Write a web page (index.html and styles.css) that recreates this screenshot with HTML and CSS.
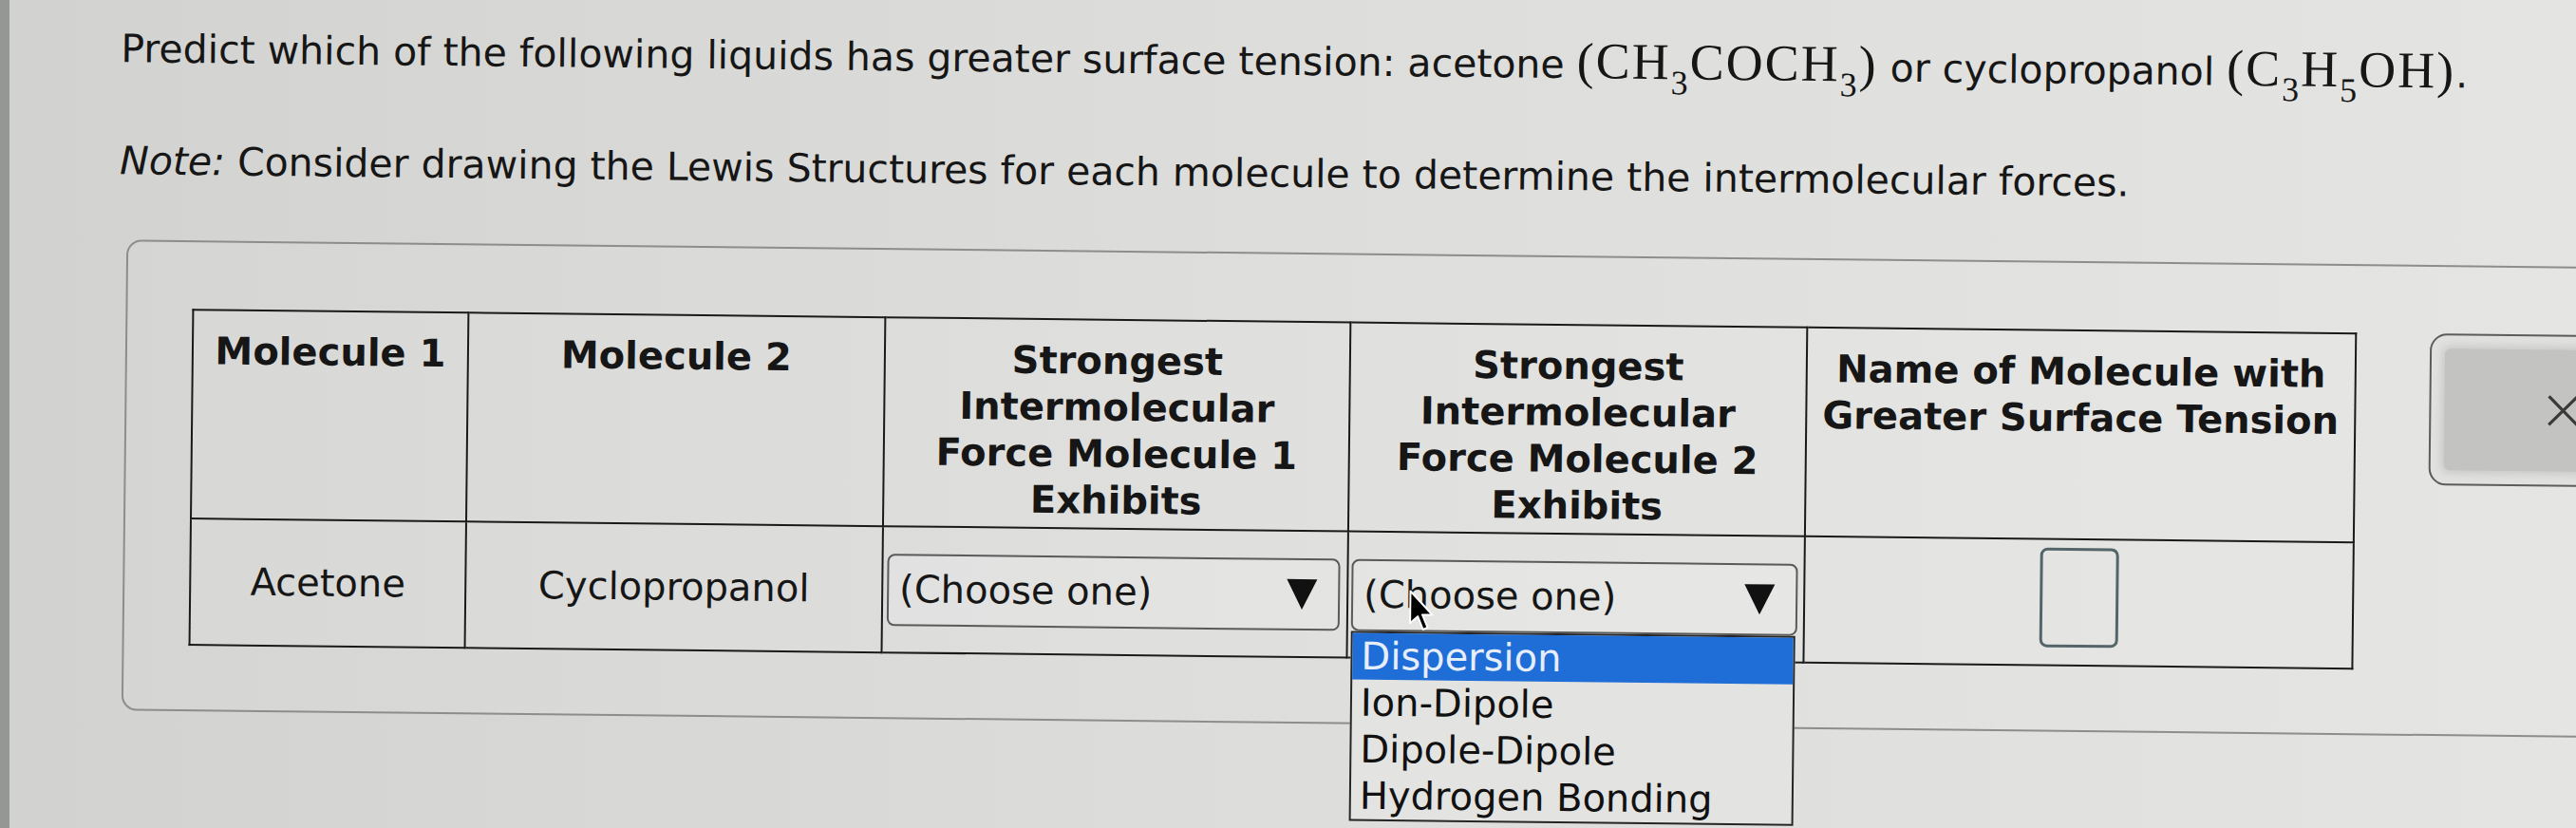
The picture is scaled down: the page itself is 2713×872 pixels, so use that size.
FILE: index.html
```html
<!DOCTYPE html>
<html lang="en">
<head>
<meta charset="utf-8">
<title>Surface tension question</title>
<link rel="stylesheet" href="styles.css">
</head>
<body>
<div class="screen">
  <div class="bezel"></div>
  <div class="page">
    <p class="q">Predict which of the following liquids has greater surface tension: acetone <span class="m">(CH<sub>3</sub>COCH<sub>3</sub>)</span> or cyclopropanol <span class="m">(C<sub>3</sub>H<sub>5</sub>OH)</span>.</p>
    <p class="q note"><i>Note:</i> Consider drawing the Lewis Structures for each molecule to determine the intermolecular forces.</p>
    <div class="panel">
      <table class="grid">
        <colgroup>
          <col class="c1"><col class="c2"><col class="c3"><col class="c4"><col class="c5">
        </colgroup>
        <tr class="head">
          <th>Molecule 1</th>
          <th>Molecule 2</th>
          <th>Strongest<br>Intermolecular<br>Force Molecule 1<br>Exhibits</th>
          <th>Strongest<br>Intermolecular<br>Force Molecule 2<br>Exhibits</th>
          <th>Name of Molecule with<br>Greater Surface Tension</th>
        </tr>
        <tr class="body">
          <td>Acetone</td>
          <td>Cyclopropanol</td>
          <td class="sel-cell">
            <div class="select s1"><span>(Choose one)</span><span class="tri"></span></div>
          </td>
          <td class="sel-cell">
            <div class="select s2"><span>(Choose one)</span><span class="tri"></span>
              <ul class="dropdown">
                <li class="active">Dispersion</li>
                <li>Ion-Dipole</li>
                <li>Dipole-Dipole</li>
                <li>Hydrogen Bonding</li>
              </ul>
              <svg class="cursor" width="30" height="48" viewBox="0 0 20 32"><path d="M1.5 1.5 L1.5 24 L6.8 19.2 L10.6 28.4 L13.8 27 L10 18 L17 18 Z" fill="#000" stroke="#fff" stroke-width="1.3" stroke-linejoin="round"/></svg>
            </div>
          </td>
          <td><span class="answer"></span></td>
        </tr>
      </table>
      <div class="clear-btn">
        <div class="clear-inner">
          <svg width="34" height="34" viewBox="0 0 34 34"><path d="M2 2 L32 32 M32 2 L2 32" stroke="#3a3a3a" stroke-width="3.2" fill="none"/></svg>
        </div>
      </div>
    </div>
  </div>
</div>
</body>
</html>
```
FILE: styles.css
```css
html, body {
  margin: 0;
  padding: 0;
}
body {
  width: 2713px;
  height: 872px;
  overflow: hidden;
  background: linear-gradient(90deg, #d2d3d0 0%, #dcdcda 45%, #e4e4e2 100%);
  color: #161616;
  font-family: "DejaVu Sans", Verdana, sans-serif;
}
.screen {
  display: flex;
  width: 2713px;
  height: 872px;
  overflow: hidden;
}
.bezel {
  flex: none;
  width: 10px;
  background: #959794;
}
.page {
  flex: none;
  width: 2800px;
  padding-top: 20px;
  transform: rotate(0.63deg);
  transform-origin: 0 0;
}
.q {
  margin: 0 0 0 118px;
  font-size: 41px;
  line-height: 60px;
  white-space: nowrap;
}
.note {
  margin-top: 58px;
}
.note i {
  font-style: oblique;
}
.m {
  font-family: "Liberation Serif", "Times New Roman", serif;
  font-size: 54px;
  letter-spacing: 2px;
  line-height: 0;
}
.m sub {
  font-size: 36px;
  vertical-align: -16px;
  line-height: 0;
}
.panel {
  margin: 53px 0 0 126px;
  width: 2700px;
  box-sizing: border-box;
  border: 2px solid #8d8e8b;
  border-radius: 16px;
  padding: 70px 0 67px 68px;
  display: flex;
  align-items: flex-start;
  gap: 77px;
  background: rgba(255, 255, 255, 0.05);
}
.grid {
  border-collapse: collapse;
  table-layout: fixed;
  flex: none;
  background: rgba(255, 255, 255, 0.07);
  border: 2px solid #151515;
}
.c1 { width: 290px; }
.c2 { width: 439px; }
.c3 { width: 490px; }
.c4 { width: 481px; }
.c5 { width: 578px; }
.grid th, .grid td {
  border: 2px solid #1a1a1a;
  text-align: center;
  padding: 0;
}
.head {
  height: 220px;
}
.grid th {
  vertical-align: top;
  font-weight: bold;
  font-size: 40px;
  line-height: 49px;
  padding-top: 18px;
}
.body {
  height: 133px;
}
.grid td {
  vertical-align: middle;
  font-size: 40px;
  line-height: 49px;
}
.grid td.sel-cell {
  text-align: left;
}
.select {
  box-sizing: border-box;
  height: 76px;
  border: 2px solid #5a5a5a;
  border-radius: 8px;
  background: rgba(255, 255, 255, 0.14);
  display: flex;
  align-items: center;
  justify-content: space-between;
  padding: 0 22px 0 11px;
  font-size: 40px;
}
.s1 {
  width: 477px;
  margin-left: 4px;
}
.s2 {
  width: 470px;
  margin-left: 3px;
  position: relative;
}
.tri {
  width: 0;
  height: 0;
  border-left: 16px solid transparent;
  border-right: 16px solid transparent;
  border-top: 32px solid #111;
}
.dropdown {
  position: absolute;
  left: -2px;
  top: 74px;
  width: 468px;
  box-sizing: border-box;
  margin: 0;
  padding: 0;
  list-style: none;
  border: 2px solid #262626;
  background: #e3e3e1;
  z-index: 2;
}
.dropdown li {
  height: 49px;
  line-height: 49px;
  padding-left: 9px;
  font-size: 40px;
  white-space: nowrap;
  color: #111;
}
.dropdown li.active {
  background: #1f6dd6;
  color: #e6eefb;
}
.cursor {
  position: absolute;
  left: 58px;
  top: 29px;
  z-index: 3;
}
.answer {
  display: inline-block;
  box-sizing: border-box;
  width: 83px;
  height: 105px;
  border: 3px solid #54656a;
  border-radius: 8px;
  vertical-align: middle;
  margin-bottom: 11px;
}
.clear-btn {
  flex: none;
  width: 282px;
  height: 160px;
  box-sizing: border-box;
  border: 2px solid #5c5d5b;
  border-radius: 18px;
  padding: 14px;
  background: #e1e1df;
}
.clear-inner {
  height: 128px;
  border-radius: 6px;
  background: #c3c4c1;
  box-shadow: 0 0 8px 3px #c8c9c6;
  display: flex;
  align-items: center;
  justify-content: center;
}
```
